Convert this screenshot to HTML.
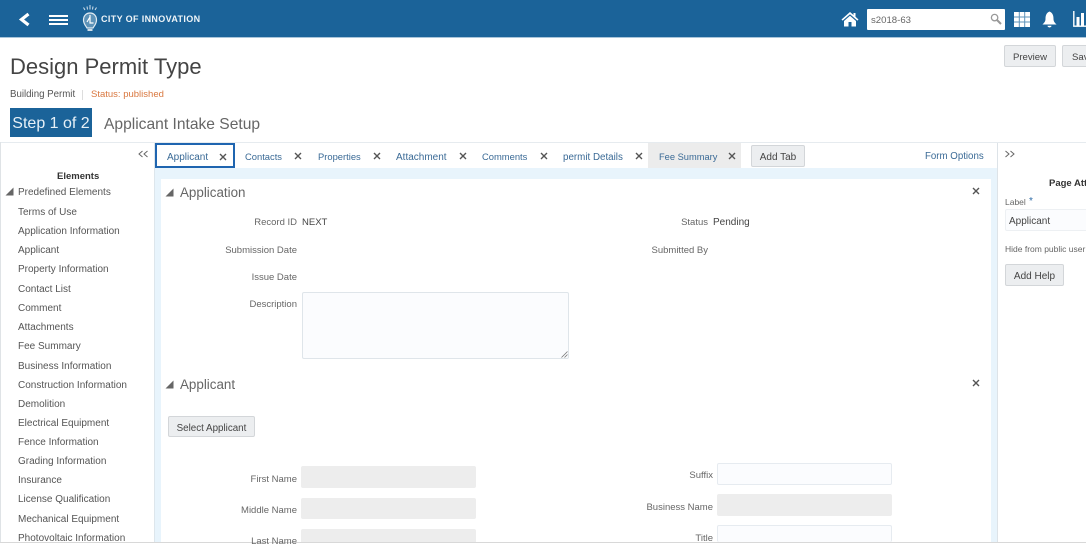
<!DOCTYPE html>
<html><head><meta charset="utf-8"><style>
html,body{margin:0;padding:0;background:#fff}
#p{position:relative;width:1086px;height:547px;overflow:hidden;background:#fff;font-family:"Liberation Sans",sans-serif;font-size:10px;color:#555}
#p div,#p svg{position:absolute}
.t{white-space:nowrap;line-height:14px;height:14px}
.r{text-align:right;width:120px;font-size:9.5px;color:#666}
.l{color:#555;left:18px}
.b{color:#3a6a96;font-size:9.4px}
.h{font-size:13.4px;color:#666;line-height:18px;height:18px}
.btn{background:#eceef0;border:1px solid #d3d6d9;border-radius:2px;color:#444;text-align:center;box-sizing:border-box;white-space:nowrap}
.g{background:#ededed;border-radius:2px}
.w{background:#fbfcfe;border:1px solid #e6ebf0;border-radius:2px;box-sizing:border-box}
</style></head><body><div id="p">
<div style="left:0;top:0;width:1086px;height:37px;background:#1b6399"></div>
<div style="left:0;top:37px;width:1086px;height:1px;background:#a9c5da"></div>
<svg style="left:18px;top:12px" width="13" height="15" viewBox="0 0 13 15"><path d="M10.500 2 L3.500 7.500 L10.500 13" fill="none" stroke="#fff" stroke-width="3.200"/></svg>
<div style="left:49px;top:15px;width:19px;height:2px;background:#fff"></div>
<div style="left:49px;top:19px;width:19px;height:2px;background:#fff"></div>
<div style="left:49px;top:23px;width:19px;height:2px;background:#fff"></div>
<svg style="left:82px;top:4px" width="16" height="28" viewBox="0 0 16 28"><path d="M8 9C4 9 1.500 12 1.500 16C1.500 20 4 22 5 24H11C12 22 14.500 20 14.500 16C14.500 12 12 9 8 9Z" fill="#5d92b8" stroke="#e2ecf3" stroke-width="1.200"/><path d="M5.500 26H10.500" stroke="#e2ecf3" stroke-width="1.800"/><path d="M8 11V19H11.500M5 18L8 13" fill="none" stroke="#fff" stroke-width="1.200"/><path d="M3 6L1.500 3.500M13 6L14.500 3.500M8 5.500V1M5.500 5.500L5 2.500M10.500 5.500L11 2.500" fill="none" stroke="#d5e3ee" stroke-width="1"/></svg>
<div class="t" style="left:101px;top:12px;color:#eef4f8;font-size:9px;font-weight:bold;letter-spacing:.36px">CITY OF INNOVATION</div>
<svg style="left:841px;top:11px" width="18" height="16" viewBox="0 0 18 16"><path d="M9 1L0.500 8.500L1.600 9.600L9 3.200L16.400 9.600L17.500 8.500L14.500 5.800V2H12.500V4Z M3 10V15.500H7.500V11H10.500V15.500H15V10L9 4.800Z" fill="#fff"/></svg>
<div style="left:867px;top:9px;width:138px;height:21px;background:#fff;border-radius:1px"></div>
<div class="t" style="left:871px;top:14px;color:#666;font-size:9.600px">s2018-63</div>
<svg style="left:990px;top:13px" width="12" height="12" viewBox="0 0 12 12"><circle cx="4.600" cy="4.600" r="3.200" fill="none" stroke="#999" stroke-width="1.300"/><path d="M7 7L11 11" stroke="#999" stroke-width="2"/></svg>
<svg style="left:1014px;top:12px" width="16" height="15" viewBox="0 0 16 15"><rect x="0" y="0" width="16" height="15" fill="#fff"/><path d="M5.300 0V15M10.700 0V15M0 5H16M0 10H16" stroke="#5e93ba" stroke-width="1"/></svg>
<svg style="left:1042px;top:11px" width="15" height="17" viewBox="0 0 15 17"><path d="M7.500 0.500C4 2 3.500 5 3.500 8C3.500 10.500 2 12 0.500 13.500H14.500C13 12 11.500 10.500 11.500 8C11.500 5 11 2 7.500 0.500Z M5.500 14.800H9.500C9.500 17 5.500 17 5.500 14.800Z" fill="#fff"/></svg>
<svg style="left:1073px;top:11px" width="13" height="16" viewBox="0 0 13 16"><path d="M0.800 0V15.200H13" fill="none" stroke="#fff" stroke-width="1.400"/><rect x="3.500" y="6" width="3" height="8.500" fill="#fff"/><rect x="8" y="2" width="3" height="12.500" fill="#fff"/></svg>

<div class="btn" style="left:1004px;top:45px;width:52px;height:22px;line-height:23px;font-size:9.600px">Preview</div>
<div class="btn" style="left:1062px;top:45px;width:40px;height:22px;line-height:23px;text-align:left;padding-left:9px;font-size:9.600px">Save</div>

<div class="t" style="left:10px;top:52px;height:30px;line-height:30px;font-size:22px;color:#444">Design Permit Type</div>
<div class="t" style="left:10px;top:88px;color:#555;font-size:9.700px">Building Permit</div>
<div style="left:82px;top:90px;width:1px;height:10px;background:#ddd"></div>
<div class="t" style="left:91px;top:88px;color:#d9773f;font-size:9.500px">Status: published</div>
<div class="t" style="left:10px;top:108px;width:82px;height:29px;line-height:31px;background:#1b6399;color:#e6f0f7;font-size:16px;text-align:center">Step 1 of 2</div>
<div class="t" style="left:104px;top:115px;height:20px;line-height:20px;font-size:15.600px;color:#666">Applicant Intake Setup</div>

<div style="left:0;top:142px;width:1086px;height:1px;background:#e6ebef"></div>
<div style="left:0;top:142px;width:1px;height:400px;background:#dfe3e6"></div>
<div style="left:154px;top:143px;width:1px;height:400px;background:#dde6ec"></div>
<div style="left:155px;top:168px;width:843px;height:375px;background:#e8f4fc"></div>
<div style="left:161px;top:179px;width:830px;height:364px;background:#fff"></div>
<div style="left:997px;top:143px;width:1px;height:400px;background:#dde3e8"></div>
<div style="left:0;top:542px;width:1086px;height:1px;background:#d8d8d8"></div>
<div style="left:0;top:543px;width:1086px;height:4px;background:#fff"></div>

<svg style="left:138px;top:150px" width="11" height="8" viewBox="0 0 11 8"><path d="M4.500 1L1 4L4.500 7M9.500 1L6 4L9.500 7" fill="none" stroke="#666" stroke-width="1"/></svg>
<div class="t" style="left:57px;top:170px;font-weight:bold;color:#333;font-size:9.500px">Elements</div>
<svg style="left:5px;top:187px" width="9" height="9" viewBox="0 0 9 9"><path d="M8.500 0.500V8.500H0.500Z" fill="#666"/></svg>
<div class="t" style="left:18px;top:186px">Predefined Elements</div>
<div class="t l" style="top:206px">Terms of Use</div>
<div class="t l" style="top:225px">Application Information</div>
<div class="t l" style="top:244px">Applicant</div>
<div class="t l" style="top:263px">Property Information</div>
<div class="t l" style="top:283px">Contact List</div>
<div class="t l" style="top:302px">Comment</div>
<div class="t l" style="top:321px">Attachments</div>
<div class="t l" style="top:340px">Fee Summary</div>
<div class="t l" style="top:360px">Business Information</div>
<div class="t l" style="top:379px">Construction Information</div>
<div class="t l" style="top:398px">Demolition</div>
<div class="t l" style="top:417px">Electrical Equipment</div>
<div class="t l" style="top:436px">Fence Information</div>
<div class="t l" style="top:455px">Grading Information</div>
<div class="t l" style="top:474px">Insurance</div>
<div class="t l" style="top:493px">License Qualification</div>
<div class="t l" style="top:513px">Mechanical Equipment</div>
<div class="t l" style="top:532px">Photovoltaic Information</div>

<div style="left:155px;top:143px;width:80px;height:25px;border:2px solid #1f65b0;box-sizing:border-box;background:#fff"></div>
<div style="left:648px;top:143px;width:93px;height:25px;background:#ececec"></div>
<div class="t b" style="left:167px;top:151px;font-size:10px">Applicant</div>
<div class="t b" style="left:245px;top:150px">Contacts</div>
<div class="t b" style="left:318px;top:150px">Properties</div>
<div class="t b" style="left:396px;top:151px;font-size:10px">Attachment</div>
<div class="t b" style="left:482px;top:150px">Comments</div>
<div class="t b" style="left:563px;top:151px;font-size:9.800px">permit Details</div>
<div class="t b" style="left:659px;top:150px;font-size:9.300px">Fee Summary</div>
<svg style="left:219px;top:153px" width="8" height="8" viewBox="0 0 8 8"><path d="M1 1L7 7M7 1L1 7" stroke="#555" stroke-width="1.400"/></svg>
<svg style="left:294px;top:152px" width="8" height="8" viewBox="0 0 8 8"><path d="M1 1L7 7M7 1L1 7" stroke="#555" stroke-width="1.400"/></svg>
<svg style="left:373px;top:152px" width="8" height="8" viewBox="0 0 8 8"><path d="M1 1L7 7M7 1L1 7" stroke="#555" stroke-width="1.400"/></svg>
<svg style="left:459px;top:152px" width="8" height="8" viewBox="0 0 8 8"><path d="M1 1L7 7M7 1L1 7" stroke="#555" stroke-width="1.400"/></svg>
<svg style="left:540px;top:152px" width="8" height="8" viewBox="0 0 8 8"><path d="M1 1L7 7M7 1L1 7" stroke="#555" stroke-width="1.400"/></svg>
<svg style="left:635px;top:152px" width="8" height="8" viewBox="0 0 8 8"><path d="M1 1L7 7M7 1L1 7" stroke="#555" stroke-width="1.400"/></svg>
<svg style="left:728px;top:152px" width="8" height="8" viewBox="0 0 8 8"><path d="M1 1L7 7M7 1L1 7" stroke="#555" stroke-width="1.400"/></svg>
<div class="btn" style="left:751px;top:145px;width:54px;height:22px;line-height:23px">Add Tab</div>
<div class="t b" style="left:925px;top:150px;font-size:9.700px">Form Options</div>
<svg style="left:1004px;top:150px" width="11" height="8" viewBox="0 0 11 8"><path d="M1.500 1L5 4L1.500 7M6.500 1L10 4L6.500 7" fill="none" stroke="#666" stroke-width="1"/></svg>

<svg style="left:165px;top:188px" width="9" height="9" viewBox="0 0 9 9"><path d="M8.500 0.500V8.500H0.500Z" fill="#666"/></svg>
<div class="t h" style="left:180px;top:184px">Application</div>
<svg style="left:972px;top:187px" width="8" height="8" viewBox="0 0 8 8"><path d="M1 1L7 7M7 1L1 7" stroke="#555" stroke-width="1.400"/></svg>
<div class="t r" style="left:177px;top:216px">Record ID</div>
<div class="t" style="left:302px;top:216px;color:#444;font-size:9.500px">NEXT</div>
<div class="t r" style="left:588px;top:216px">Status</div>
<div class="t" style="left:713px;top:216px;color:#444">Pending</div>
<div class="t r" style="left:177px;top:244px">Submission Date</div>
<div class="t r" style="left:588px;top:244px">Submitted By</div>
<div class="t r" style="left:177px;top:271px">Issue Date</div>
<div class="t r" style="left:177px;top:298px">Description</div>
<div class="w" style="left:302px;top:292px;width:267px;height:67px;border-color:#dfe5ea"></div>
<svg style="left:561px;top:351px" width="7" height="7" viewBox="0 0 7 7"><path d="M6.500 0.500L0.500 6.500M6.500 3.500L3.500 6.500" stroke="#777" stroke-width=".8"/></svg>

<svg style="left:165px;top:380px" width="9" height="9" viewBox="0 0 9 9"><path d="M8.500 0.500V8.500H0.500Z" fill="#666"/></svg>
<div class="t h" style="left:180px;top:376px">Applicant</div>
<svg style="left:972px;top:379px" width="8" height="8" viewBox="0 0 8 8"><path d="M1 1L7 7M7 1L1 7" stroke="#555" stroke-width="1.400"/></svg>
<div class="btn" style="left:168px;top:416px;width:87px;height:21px;line-height:23px;font-size:9.800px">Select Applicant</div>

<div class="t r" style="left:177px;top:473px">First Name</div>
<div class="g" style="left:301px;top:466px;width:175px;height:22px"></div>
<div class="t r" style="left:177px;top:504px">Middle Name</div>
<div class="g" style="left:301px;top:498px;width:175px;height:21px"></div>
<div class="t r" style="left:177px;top:535px">Last Name</div>
<div class="g" style="left:301px;top:529px;width:175px;height:13px;border-radius:2px 2px 0 0"></div>
<div class="t r" style="left:593px;top:469px">Suffix</div>
<div class="w" style="left:717px;top:463px;width:175px;height:22px"></div>
<div class="t r" style="left:593px;top:501px">Business Name</div>
<div class="g" style="left:717px;top:494px;width:175px;height:22px"></div>
<div class="t r" style="left:593px;top:532px">Title</div>
<div class="w" style="left:717px;top:525px;width:175px;height:17px;border-bottom:0"></div>

<div class="t" style="left:1049px;top:177px;font-weight:bold;color:#333;font-size:9.500px">Page Attributes</div>
<div class="t" style="left:1005px;top:195px;font-size:8.500px;color:#666">Label</div>
<div class="t" style="left:1029px;top:195px;color:#2f6da8">*</div>
<div class="w" style="left:1005px;top:209px;width:100px;height:22px;border-color:#edf0f3"></div>
<div class="t" style="left:1009px;top:215px;color:#444">Applicant</div>
<div class="t" style="left:1005px;top:242px;font-size:8.500px;color:#666">Hide from public user</div>
<div class="btn" style="left:1005px;top:264px;width:59px;height:22px;line-height:23px">Add Help</div>
</div></body></html>
